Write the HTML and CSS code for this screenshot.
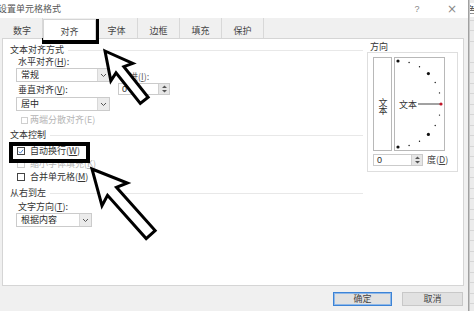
FILE: index.html
```html
<!DOCTYPE html>
<html lang="zh-CN">
<head>
<meta charset="utf-8">
<title>设置单元格格式</title>
<link rel="stylesheet" href="styles.css">
</head>
<body>
<div class="screen">
  <div class="dialog">
    <div class="titlebar">
      <span class="title">设置单元格格式</span>
      <span class="help">?</span>
      <span class="close">×</span>
    </div>
    <div class="tabs">
      <div class="tab first">数字</div>
      <div class="tab active">对齐</div>
      <div class="tab">字体</div>
      <div class="tab">边框</div>
      <div class="tab">填充</div>
      <div class="tab">保护</div>
    </div>
    <div class="panel">
      <div class="left">
        <div class="group-title"><span>文本对齐方式</span></div>
        <div class="align-row">
          <div class="align-col">
            <div class="label">水平对齐(<u>H</u>):</div>
            <div class="select w94"><span>常规</span><i class="drop"><svg width="7" height="5" viewBox="0 0 7 5"><path d="M1 1 L3.5 3.5 L6 1" fill="none" stroke="#555" stroke-width="1"/></svg></i></div>
            <div class="label tall">垂直对齐(<u>V</u>):</div>
            <div class="select w94"><span>居中</span><i class="drop"><svg width="7" height="5" viewBox="0 0 7 5"><path d="M1 1 L3.5 3.5 L6 1" fill="none" stroke="#555" stroke-width="1"/></svg></i></div>
          </div>
          <div class="indent-col">
            <div class="label">缩进(<u>I</u>):</div>
            <div class="spin w52"><span>0</span><i class="spinbtn"><svg width="7" height="10" viewBox="0 0 7 10"><path d="M1 4 L3.5 1.5 L6 4 Z M1 6 L3.5 8.5 L6 6 Z" fill="#555"/></svg></i></div>
          </div>
        </div>
        <div class="check disabled small"><i class="box"></i><span>两端分散对齐(E)</span></div>
        <div class="group-title gap3"><span>文本控制</span></div>
        <div class="check gap4"><i class="box"><svg width="7" height="7" viewBox="0 0 7 7"><path d="M1 3.6 L2.8 5.4 L6 1.4" fill="none" stroke="#2b6cc4" stroke-width="1"/></svg></i><span>自动换行(<u>W</u>)</span></div>
        <div class="check disabled gap1"><i class="box"></i><span>缩小字体填充(<u>K</u>)</span></div>
        <div class="check gap1"><i class="box"></i><span>合并单元格(<u>M</u>)</span></div>
        <div class="group-title gap4"><span>从右到左</span></div>
        <div class="label sub">文字方向(<u>T</u>):</div>
        <div class="select w76"><span>根据内容</span><i class="drop"><svg width="7" height="5" viewBox="0 0 7 5"><path d="M1 1 L3.5 3.5 L6 1" fill="none" stroke="#555" stroke-width="1"/></svg></i></div>
      </div>
      <div class="orient">
        <div class="orient-title">方向</div>
        <div class="orient-frame">
          <div class="orient-boxes">
            <div class="vbox"><span class="vtext">文本</span></div>
            <div class="dial">
              <svg width="49" height="92" viewBox="0 0 49 92">
                <g fill="#111">
                  <circle cx="3" cy="3" r="1.6"/>
                  <circle cx="14.1" cy="4.5" r="0.7"/>
                  <circle cx="24.5" cy="8.8" r="0.7"/>
                  <circle cx="33.4" cy="15.6" r="1.6"/>
                  <circle cx="40.2" cy="24.5" r="0.7"/>
                  <circle cx="44.5" cy="34.9" r="0.7"/>
                  <circle cx="44.5" cy="57.1" r="0.7"/>
                  <circle cx="40.2" cy="67.5" r="0.7"/>
                  <circle cx="33.4" cy="76.4" r="1.6"/>
                  <circle cx="24.5" cy="83.2" r="0.7"/>
                  <circle cx="14.1" cy="87.5" r="0.7"/>
                  <circle cx="3" cy="89" r="1.6"/>
                </g>
                <text x="4" y="49.5" class="dial-text">文本</text>
                <line x1="23" y1="46" x2="45" y2="46" stroke="#444" stroke-width="1"/>
                <circle cx="46" cy="46" r="1.6" fill="#c0162a"/>
              </svg>
            </div>
          </div>
          <div class="deg-row">
            <div class="spin w50"><span>0</span><i class="spinbtn"><svg width="7" height="10" viewBox="0 0 7 10"><path d="M1 4 L3.5 1.5 L6 4 Z M1 6 L3.5 8.5 L6 6 Z" fill="#555"/></svg></i></div>
            <span class="deg">度(<u>D</u>)</span>
          </div>
        </div>
      </div>
    </div>
    <div class="footer">
      <button class="btn primary">确定</button>
      <button class="btn">取消</button>
    </div>
  </div>
  <div class="excel"><span class="excel-char">色</span></div>
</div>
<svg class="annot" width="474" height="311" viewBox="0 0 474 311">
  <rect x="44" y="21" width="53" height="21" fill="none" stroke="#000" stroke-width="4"/>
  <rect x="11" y="144" width="77" height="17" fill="none" stroke="#000" stroke-width="4"/>
  <polygon transform="translate(105 51) rotate(-38.5)" points="0,0 14,27 5,24 5,63 -5,63 -5,24 -14,27" fill="#fff" stroke="#000" stroke-width="3"/>
  <polygon transform="translate(92 169) rotate(-41.8)" points="0,0 17,34 6,30 6,88 -6,88 -6,30 -17,34" fill="#fff" stroke="#000" stroke-width="3"/>
</svg>
</body>
</html>
```
FILE: styles.css
```css
* { box-sizing: border-box; margin: 0; padding: 0; }
html, body { width: 474px; height: 311px; overflow: hidden; }
body {
  font-family: "Noto Sans CJK SC", "Noto Sans", sans-serif;
  font-size: 9px;
  line-height: 12px;
  color: #2a2a2a;
  background: #e9e9e9;
  position: relative;
}
u { text-decoration: underline; }

.screen { display: flex; width: 474px; height: 311px; }

.dialog {
  width: 469px;
  height: 311px;
  flex: none;
  background: #f0f0f0;
  border-right: 1px solid #a0a0a0;
  display: flex;
  flex-direction: column;
}

.titlebar {
  height: 18px;
  background: #fff;
  display: flex;
  align-items: center;
  padding-right: 3px;
  color: #666;
  overflow: hidden;
}
.title { flex: 1; margin-left: -2px; color: #555; white-space: nowrap; }
.help { width: 20px; text-align: center; margin-right: 12px; color: #888; font-family: "Liberation Sans", sans-serif; font-size: 9px; }
.close { width: 26px; text-align: center; color: #888; font-family: "DejaVu Sans", sans-serif; font-size: 12px; }

.tabs {
  height: 20px;
  display: flex;
  padding-left: 2px;
  position: relative;
  z-index: 1;
}
.tab {
  width: 42px;
  height: 20px;
  border-right: 1px solid #d8d8d8;
  display: flex;
  align-items: center;
  justify-content: center;
  padding-top: 5px;
  color: #444;
}
.tab.first { width: 41px; }
.tab.active {
  width: 53px;
  height: 21px;
  margin-top: 1px;
  background: #fff;
  border: 1px solid #d5d5d5;
  border-bottom: none;
  padding-top: 4px;
}

.panel {
  height: 248px;
  margin: 0 4px 0 2px;
  background: #fff;
  border: 1px solid #d5d5d5;
  display: flex;
}

.left {
  width: 360px;
  padding: 5px 0 0 7px;
  display: flex;
  flex-direction: column;
}
.group-title {
  height: 12px;
  display: flex;
  align-items: center;
  gap: 4px;
  color: #333;
}
.group-title::after {
  content: "";
  flex: 1;
  height: 1px;
  background: #e8e8e8;
}
.gap1 { margin-top: 1px; }
.gap3 { margin-top: 3px; }
.gap4 { margin-top: 4px; }

.align-row { display: flex; }
.align-col { padding-left: 6px; display: flex; flex-direction: column; }
.label { height: 12px; padding-left: 2px; color: #333; white-space: nowrap; }
.label.tall { height: 15px; padding-top: 2px; }
.label.sub { margin-top: 2px; margin-left: 6px; }

.select {
  height: 14px;
  border: 1px solid #cbcbcb;
  display: flex;
  align-items: center;
  background: #fff;
}
.select span { flex: 1; padding-left: 4px; line-height: 12px; }
.select .drop {
  width: 12px;
  height: 12px;
  background: #ebebeb;
  border-left: 1px solid #d8d8d8;
  display: flex;
  align-items: center;
  justify-content: center;
}
.w94 { width: 94px; }
.w76 { width: 76px; margin-left: 6px; }

.indent-col { margin-left: 8px; padding-top: 15px; display: flex; flex-direction: column; }
.indent-col .label { padding-left: 2px; color: #666; }

.spin {
  height: 12px;
  border: 1px solid #cbcbcb;
  display: flex;
  align-items: center;
  background: #fff;
}
.spin span { flex: 1; padding-left: 3px; line-height: 10px; font-family: "Liberation Sans", sans-serif; }
.spin .spinbtn {
  width: 11px;
  height: 10px;
  background: #e6e6e6;
  border-left: 1px solid #d0d0d0;
  display: flex;
  align-items: center;
  justify-content: center;
}
.w52 { width: 52px; }
.w50 { width: 50px; }

.check {
  height: 12px;
  display: flex;
  align-items: center;
  padding-left: 7px;
  gap: 5px;
  color: #333;
  white-space: nowrap;
}
.check .box {
  width: 8px;
  height: 8px;
  border: 1px solid #444;
  background: #fff;
  display: flex;
  align-items: center;
  justify-content: center;
}
.check.disabled { color: #b5b5b5; }
.check.disabled .box { border-color: #cfcfcf; }
.check.small { margin-top: 3px; padding-left: 11px; gap: 2px; }
.check.small .box { width: 7px; height: 7px; }

.orient {
  width: 91px;
  margin-left: 4px;
  padding-top: 3px;
  display: flex;
  flex-direction: column;
}
.orient-title { height: 10px; line-height: 10px; padding-left: 3px; color: #333; }
.orient-frame {
  height: 120px;
  border: 1px solid #dedede;
  padding: 4px 0 0 5px;
  display: flex;
  flex-direction: column;
}
.orient-boxes { display: flex; gap: 2px; }
.vbox {
  width: 19px;
  height: 94px;
  border: 1px solid #b8b8b8;
  display: flex;
  align-items: center;
  justify-content: center;
  padding-top: 4px;
  color: #333;
}
.vtext {
  writing-mode: vertical-rl;
  text-orientation: upright;
  line-height: 12px;
  letter-spacing: -1px;
}
.dial {
  width: 51px;
  height: 94px;
  border: 1px solid #b8b8b8;
}
.dial svg { display: block; }
.dial-text { font-family: "Noto Sans CJK SC", sans-serif; font-size: 9px; fill: #333; }

.deg-row { margin-top: 3px; height: 12px; display: flex; align-items: center; gap: 4px; }
.deg { color: #444; white-space: nowrap; }

.footer {
  flex: 1;
  display: flex;
  justify-content: flex-end;
  align-items: center;
  gap: 10px;
  padding: 1px 5px 0 0;
}
.btn {
  height: 14px;
  width: 61px;
  font-family: "Noto Sans CJK SC", sans-serif;
  font-size: 9px;
  line-height: 12px;
  color: #444;
  background: #e1e1e1;
  border: 1px solid #c8c8c8;
}
.btn.primary {
  width: 59px;
  border: 1px solid #3c83d6;
  box-shadow: inset 0 0 0 1px #8fb8e8;
}

.excel {
  flex: 1;
  overflow: hidden;
  background-color: #ececec;
  background-image: repeating-linear-gradient(to bottom, transparent 0, transparent 9.5px, #d6d6d6 9.5px, #d6d6d6 10.5px);
  border-left: 1px solid #c8c8c8;
  position: relative;
}
.excel-char { display: block; margin-left: -3px; margin-top: 3px; color: #444; background: #fff; line-height: 14px; }

.annot { position: absolute; left: 0; top: 0; pointer-events: none; }
```
